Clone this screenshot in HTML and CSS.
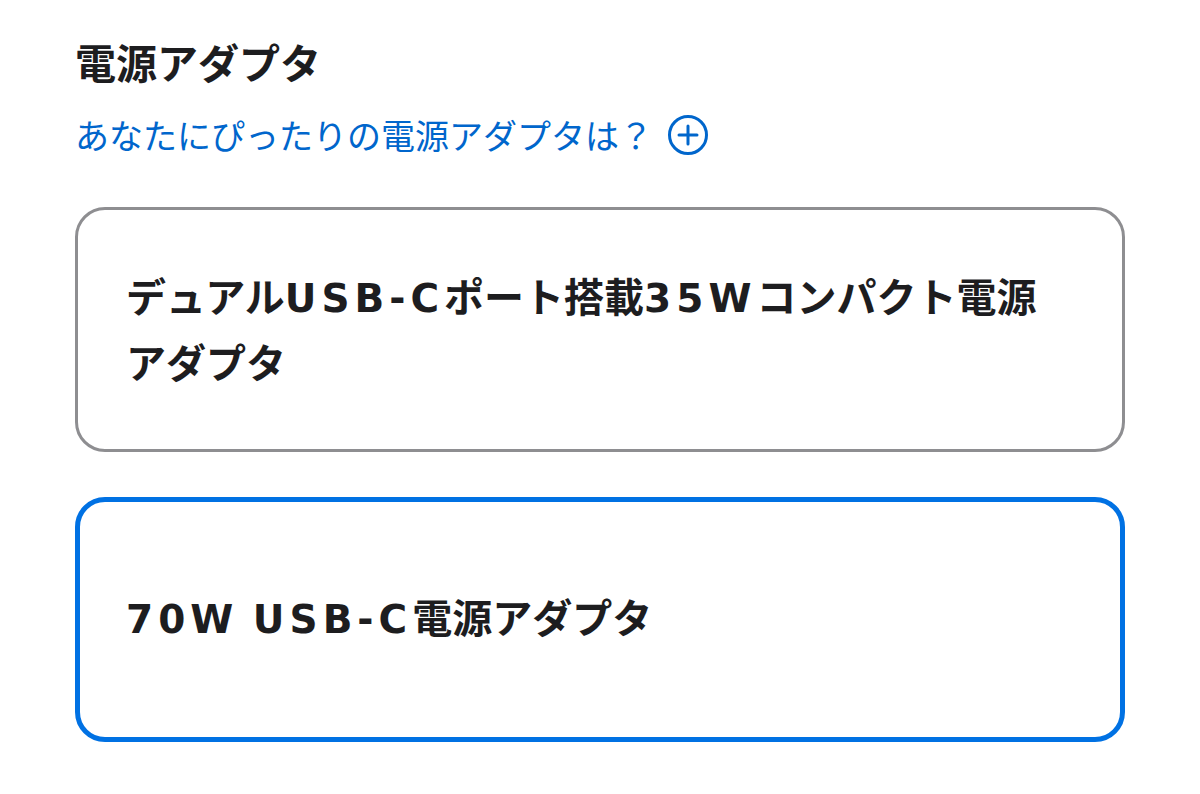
FILE: index.html
```html
<!doctype html>
<html>
<head>
<meta charset="utf-8">
<title>電源アダプタ</title>
<link rel="stylesheet" href="styles.css">
</head>
<body>
	<div class="wrap">
		<h2 class="title">電源アダプタ</h2>
		<a href="javascript:;" class="help">
			<span>あなたにぴったりの電源アダプタは？</span>
			<svg class="plus" width="42" height="42" viewBox="0 0 42 42">
				<circle cx="21" cy="21" r="18.5" fill="none" stroke="currentColor" stroke-width="3"/>
				<path d="M21 12v18M12 21h18" stroke="currentColor" stroke-width="3" stroke-linecap="round"/>
			</svg>
		</a>
		<ul class="list">
			<li class="item">
				<p>デュアル<span class="en">USB-C</span>ポート搭載<span class="en">35W</span>コンパクト電源<span class="nw">アダプタ</span></p>
			</li>
			<li class="item on">
				<p><span class="en">70W USB-C</span>電源アダプタ</p>
			</li>
		</ul>
	</div>
</body>
</html>
```

FILE: styles.css
```css
*{
	margin: 0;
	padding: 0;
	list-style: none;
}
body{
	background: #fff;
	font-family: "Noto Sans CJK JP", "Noto Sans", sans-serif;
	color: #1d1d1f;
}
.wrap{
	width: 1050px;
	padding: 34px 0 0 75px;
}
.title{
	font-size: 41px;
	font-weight: 700;
	line-height: 54px;
}
.help{
	display: flex;
	align-items: center;
	gap: 14px;
	margin-top: 25px;
	color: #0066cc;
	text-decoration: none;
	font-size: 34px;
	line-height: 44px;
}
.plus{
	display: block;
}
.list{
	margin-top: 50px;
	display: flex;
	flex-direction: column;
	gap: 45px;
}
.item{
	min-height: 245px;
	box-sizing: border-box;
	padding: 28px 48px 32px;
	border: 3px solid #8e8e91;
	border-radius: 30px;
	display: flex;
	align-items: center;
	font-size: 40px;
	font-weight: 700;
	line-height: 62px;
}
.item.on{
	border: 5px solid #0071e3;
	padding: 28px 46px 32px;
}
.en{
	font-family: "DejaVu Sans", sans-serif;
	font-size: 39px;
	letter-spacing: 5px;
	word-spacing: -4px;
}
.nw{
	white-space: nowrap;
}
```
